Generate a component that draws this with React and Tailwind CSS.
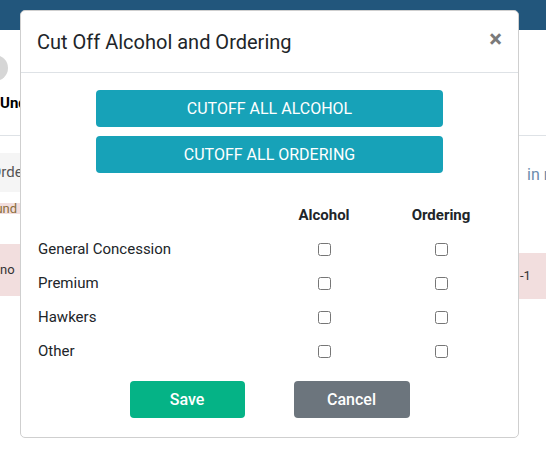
import React from 'react'

const ROWS = ['General Concession', 'Premium', 'Hawkers', 'Other']

function Backdrop() {
  return (
    <div className="flex flex-col">
      <div className="h-[30px] bg-[#22567c]" />
      <div className="relative h-[435px]">
        <div className="absolute left-[-18px] top-[25px] h-[26px] w-[26px] rounded-full bg-[#d6d6d6]" />
        <div className="absolute left-0 top-[62px] whitespace-nowrap text-[15px] font-bold text-black">Undelivered</div>
        <div className="absolute left-0 right-0 top-[105px] h-px bg-[#dee2e6]" />
        <div className="absolute left-[-10px] top-[123px] flex h-[39px] w-[70px] items-center whitespace-nowrap bg-[#f5f5f5] pl-[1px] text-[15px] text-[#555]">
          Orders
        </div>
        <div className="absolute left-[-28px] top-[173px] whitespace-nowrap bg-[#f2dede] px-1 text-[13px] leading-[11px] text-[#8a6d3b]">
          Refund
        </div>
        <div className="absolute left-0 top-[214px] flex h-[52px] w-[60px] items-center bg-[#f2dede] text-[13px] text-[#333]">
          no
        </div>
        <div className="absolute left-[527px] top-[133px] whitespace-nowrap text-[16px] text-[#6a8cad]">in review</div>
        <div className="absolute left-[518px] top-[223px] flex h-[46px] w-[40px] items-center bg-[#f2dede] pl-[2px] text-[13px] text-[#333]">
          -1
        </div>
      </div>
    </div>
  )
}

export default function App() {
  return (
    <div className="relative h-[465px] w-[546px] overflow-hidden bg-white font-['Roboto',sans-serif] text-[#212529]">
      <Backdrop />
      <div className="absolute left-[20px] top-[10px] w-[499px] rounded-[5px] border border-[#cfcfcf] bg-white">
        <div className="flex h-[62px] items-center justify-between border-b border-[#dee2e6] pl-4 pr-4">
          <h5 className="text-[20px] leading-none">Cut Off Alcohol and Ordering</h5>
          <button className="mb-[6px] text-[24px] font-bold leading-none text-[#7a7a7a]">×</button>
        </div>

        <div className="flex flex-col items-center gap-[9px] pt-[17px]">
          <button className="h-[37px] w-[347px] rounded-[4px] bg-[#17a2b8] text-[16px] uppercase text-white">
            Cutoff all alcohol
          </button>
          <button className="h-[37px] w-[347px] rounded-[4px] bg-[#17a2b8] text-[16px] uppercase text-white">
            Cutoff all ordering
          </button>
        </div>

        <div className="mt-[25px] grid grid-cols-[227px_118px_116px] pl-[17px] text-[15px]">
          <div className="h-[34px]" />
          <div className="flex h-[34px] items-center justify-center font-bold">Alcohol</div>
          <div className="flex h-[34px] items-center justify-center font-bold">Ordering</div>
          {ROWS.map((r) => (
            <React.Fragment key={r}>
              <div className="flex h-[34px] items-center">{r}</div>
              <div className="flex h-[34px] items-center justify-center">
                <input type="checkbox" className="h-[13px] w-[13px]" />
              </div>
              <div className="flex h-[34px] items-center justify-center">
                <input type="checkbox" className="h-[13px] w-[13px]" />
              </div>
            </React.Fragment>
          ))}
        </div>

        <div className="mt-[13px] flex justify-center gap-[49px] pb-[19px]">
          <button className="h-[37px] w-[115px] rounded-[4px] bg-[#05b386] text-[16px] font-medium text-white">Save</button>
          <button className="h-[37px] w-[116px] rounded-[4px] bg-[#6c757d] text-[16px] font-medium text-white">Cancel</button>
        </div>
      </div>
    </div>
  )
}
